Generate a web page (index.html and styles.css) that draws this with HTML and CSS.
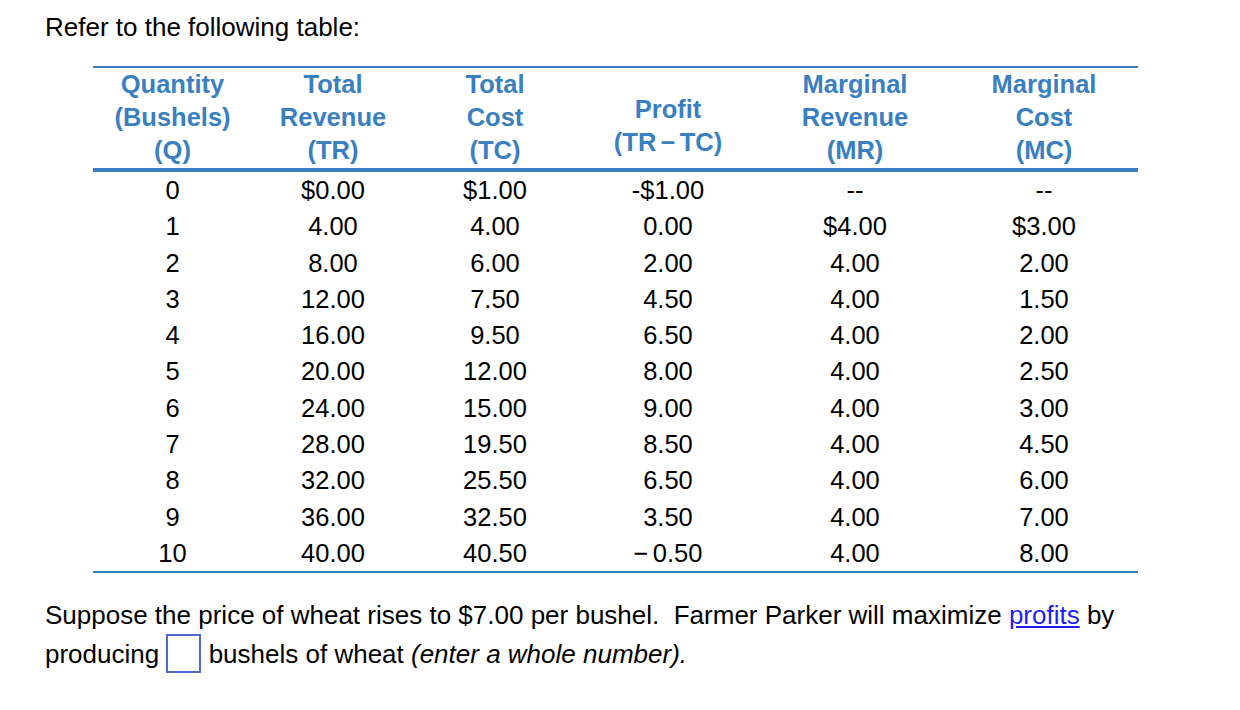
FILE: index.html
```html
<!DOCTYPE html>
<html>
<head>
<meta charset="utf-8">
<link rel="stylesheet" href="styles.css">
</head>
<body>
<div class="page">
  <p class="intro">Refer to the following table:</p>
  <table class="data">
    <thead>
      <tr>
        <th class="c1">Quantity<br>(Bushels)<br>(Q)</th>
        <th class="c2">Total<br>Revenue<br>(TR)</th>
        <th class="c3">Total<br>Cost<br>(TC)</th>
        <th class="c4 shifted">Profit<br>(TR&#8198;&minus;&#8198;TC)</th>
        <th class="c5">Marginal<br>Revenue<br>(MR)</th>
        <th class="c6">Marginal<br>Cost<br>(MC)</th>
      </tr>
    </thead>
    <tbody>
      <tr><td>0</td><td>$0.00</td><td>$1.00</td><td>-$1.00</td><td>--</td><td>--</td></tr>
      <tr><td>1</td><td>4.00</td><td>4.00</td><td>0.00</td><td>$4.00</td><td>$3.00</td></tr>
      <tr><td>2</td><td>8.00</td><td>6.00</td><td>2.00</td><td>4.00</td><td>2.00</td></tr>
      <tr><td>3</td><td>12.00</td><td>7.50</td><td>4.50</td><td>4.00</td><td>1.50</td></tr>
      <tr><td>4</td><td>16.00</td><td>9.50</td><td>6.50</td><td>4.00</td><td>2.00</td></tr>
      <tr><td>5</td><td>20.00</td><td>12.00</td><td>8.00</td><td>4.00</td><td>2.50</td></tr>
      <tr><td>6</td><td>24.00</td><td>15.00</td><td>9.00</td><td>4.00</td><td>3.00</td></tr>
      <tr><td>7</td><td>28.00</td><td>19.50</td><td>8.50</td><td>4.00</td><td>4.50</td></tr>
      <tr><td>8</td><td>32.00</td><td>25.50</td><td>6.50</td><td>4.00</td><td>6.00</td></tr>
      <tr><td>9</td><td>36.00</td><td>32.50</td><td>3.50</td><td>4.00</td><td>7.00</td></tr>
      <tr><td>10</td><td>40.00</td><td>40.50</td><td>&minus;&#8198;0.50</td><td>4.00</td><td>8.00</td></tr>
    </tbody>
  </table>
  <p class="question">Suppose the price of wheat rises to $7.00 per bushel.&nbsp; Farmer Parker will maximize <a href="#" class="term">profits</a> by<br>producing <span class="answer"></span> bushels of wheat <em>(enter a whole number).</em></p>
</div>
</body>
</html>
```
FILE: styles.css
```css
html, body {
  margin: 0;
  padding: 0;
  background: #ffffff;
}
.page {
  font-family: "Liberation Sans", Arial, sans-serif;
  font-size: 26px;
  color: #000;
  padding: 12px 0 0 45px;
}
.intro {
  margin: 0;
  line-height: 30px;
}
.data {
  margin: 24px 0 0 48px;
  border-collapse: collapse;
  table-layout: fixed;
  width: 1045px;
  border-top: 2px solid #3a7fc0;
  border-bottom: 2px solid #3a7fc0;
  font-size: 25.5px;
}
.data th {
  color: #3a7fc0;
  font-weight: bold;
  line-height: 33px;
  padding: 0 0 1px;
  vertical-align: middle;
  border-bottom: 4px solid #3a7fc0;
}
.data th.shifted {
  padding-top: 16px;
}
.data td {
  text-align: center;
  line-height: 36.3px;
  padding: 0;
}
.c1 { width: 159px; }
.c2 { width: 162px; }
.c3 { width: 162px; }
.c4 { width: 184px; }
.c5 { width: 190px; }
.c6 { width: 188px; }
.question {
  margin: 23px 0 0;
  line-height: 38px;
}
.term {
  color: #1f1ff5;
  text-decoration: underline;
}
.answer {
  display: inline-block;
  width: 31px;
  height: 35px;
  border: 2px solid #4a6cc8;
  vertical-align: -10px;
}
em {
  font-style: italic;
}
```
